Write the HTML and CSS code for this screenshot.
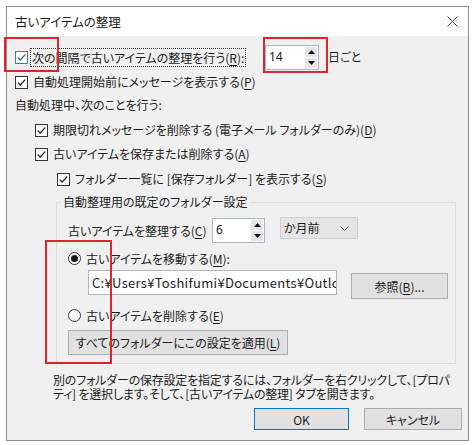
FILE: index.html
```html
<!DOCTYPE html>
<html lang="ja">
<head>
<meta charset="utf-8">
<title>古いアイテムの整理</title>
<link rel="stylesheet" href="styles.css">
</head>
<body>
<div class="dialog">
  <div class="titlebar">
    <span class="title">古いアイテムの整理</span>
    <svg class="close" width="11" height="11" viewBox="0 0 11 11"><path d="M0.5 0.5 L10.5 10.5 M10.5 0.5 L0.5 10.5" stroke="#444" stroke-width="1" fill="none"/></svg>
  </div>
  <div class="content">
    <div class="row row1">
      <div class="row1-left">
        <span class="cb cb-focus"><svg width="11" height="11" viewBox="0 0 11 11"><polyline points="1.8,5.6 4.2,8 9.2,2.6" fill="none" stroke="#2b5f9e" stroke-width="1.3"/></svg></span>
        <span class="focus-label">次の間隔で古いアイテムの整理を行う(<u>R</u>):</span>
      </div>
      <div class="spin">
        <div class="spin-input">14</div>
        <div class="spin-btns">
          <span class="spin-btn"><svg width="7" height="4" viewBox="0 0 7 4"><path d="M0 4 L3.5 0 L7 4 Z" fill="#111"/></svg></span>
          <span class="spin-btn"><svg width="7" height="4" viewBox="0 0 7 4"><path d="M0 0 L3.5 4 L7 0 Z" fill="#111"/></svg></span>
        </div>
      </div>
      <span class="unit">日ごと</span>
    </div>

    <div class="row row2">
      <span class="cb"><svg width="11" height="11" viewBox="0 0 11 11"><polyline points="1.8,5.6 4.2,8 9.2,2.6" fill="none" stroke="#222" stroke-width="1.3"/></svg></span>
      <span class="lbl">自動処理開始前にメッセージを表示する(<u>P</u>)</span>
    </div>

    <div class="row row3">
      <span>自動処理中、次のことを行う:</span>
    </div>

    <div class="row row4 indent1">
      <span class="cb"><svg width="11" height="11" viewBox="0 0 11 11"><polyline points="1.8,5.6 4.2,8 9.2,2.6" fill="none" stroke="#222" stroke-width="1.3"/></svg></span>
      <span class="lbl">期限切れメッセージを削除する (電子メール フォルダーのみ)(<u>D</u>)</span>
    </div>

    <div class="row row5 indent1">
      <span class="cb"><svg width="11" height="11" viewBox="0 0 11 11"><polyline points="1.8,5.6 4.2,8 9.2,2.6" fill="none" stroke="#222" stroke-width="1.3"/></svg></span>
      <span class="lbl">古いアイテムを保存または削除する(<u>A</u>)</span>
    </div>

    <div class="row row6 indent2">
      <span class="cb"><svg width="11" height="11" viewBox="0 0 11 11"><polyline points="1.8,5.6 4.2,8 9.2,2.6" fill="none" stroke="#222" stroke-width="1.3"/></svg></span>
      <span class="lbl">フォルダー一覧に [保存フォルダー] を表示する(<u>S</u>)</span>
    </div>

    <fieldset class="group">
      <legend>自動整理用の既定のフォルダー設定</legend>
      <div class="grow growC">
        <span class="lblC">古いアイテムを整理する(<u>C</u>)</span>
        <div class="spin spin-small">
          <div class="spin-input">6</div>
          <div class="spin-btns">
            <span class="spin-btn"><svg width="7" height="4" viewBox="0 0 7 4"><path d="M0 4 L3.5 0 L7 4 Z" fill="#111"/></svg></span>
            <span class="spin-btn"><svg width="7" height="4" viewBox="0 0 7 4"><path d="M0 0 L3.5 4 L7 0 Z" fill="#111"/></svg></span>
          </div>
        </div>
        <div class="combo">
          <span>か月前</span>
          <svg width="9" height="5" viewBox="0 0 9 5"><polyline points="0.5,0.5 4.5,4.5 8.5,0.5" fill="none" stroke="#555" stroke-width="1"/></svg>
        </div>
      </div>
      <div class="grow growM">
        <span class="rb rb-on"><span class="dot"></span></span>
        <span class="lbl">古いアイテムを移動する(<u>M</u>):</span>
      </div>
      <div class="grow growPath">
        <div class="path">C:¥Users¥Toshifumi¥Documents¥Outlook</div>
        <div class="btn browse">参照(<u>B</u>)...</div>
      </div>
      <div class="grow growE">
        <span class="rb"></span>
        <span class="lbl">古いアイテムを削除する(<u>E</u>)</span>
      </div>
      <div class="btn apply">すべてのフォルダーにこの設定を適用(<u>L</u>)</div>
    </fieldset>

    <p class="note">別のフォルダーの保存設定を指定するには、フォルダーを右クリックして、[プロパ<br>ティ] を選択します。そして、[古いアイテムの整理] タブを開きます。</p>

    <div class="actions">
      <div class="btn ok">OK</div>
      <div class="btn cancel">キャンセル</div>
    </div>
  </div>

  <div class="mark mark1"></div>
  <div class="mark mark2"></div>
  <div class="mark mark3"></div>
</div>
</body>
</html>
```
FILE: styles.css
```css
html, body {
  margin: 0;
  padding: 0;
  background: #ffffff;
}
body {
  font-family: "Noto Sans CJK JP", "Noto Sans", sans-serif;
  font-size: 12px;
  font-feature-settings: "palt";
  color: #1c1c1c;
  width: 474px;
  height: 445px;
  overflow: hidden;
}
u {
  text-decoration: underline;
  text-underline-offset: 2px;
}
.dialog {
  position: relative;
  box-sizing: border-box;
  margin: 6px 0 0 6px;
  width: 463px;
  height: 435px;
  border: 1px solid #8e8e8e;
  background: #f0f0f0;
}
.titlebar {
  height: 29px;
  background: #ffffff;
  display: flex;
  align-items: center;
  justify-content: space-between;
  padding: 0 10px 0 8px;
}
.title {
  font-size: 12.5px;
  line-height: 16px;
}
.close {
  display: block;
}
.content {
  padding-left: 8px;
}
.row {
  display: flex;
  align-items: center;
  height: 18px;
  line-height: 18px;
  white-space: nowrap;
}
.row1 {
  margin-top: 8px;
  height: 26px;
}
.row1-left {
  width: 250px;
  display: flex;
  align-items: center;
}
.cb {
  box-sizing: border-box;
  width: 13px;
  height: 13px;
  border: 1px solid #333333;
  background: #ffffff;
  display: flex;
  align-items: center;
  justify-content: center;
  flex: none;
}
.cb svg {
  display: block;
}
.cb-focus {
  border-color: #3f78b5;
}
.focus-label {
  margin-left: 2px;
  padding: 0 1px;
  line-height: 17px;
  border: 1px dotted #333;
}
.lbl {
  margin-left: 5px;
}
.spin {
  display: flex;
  height: 25px;
}
.spin-input {
  box-sizing: border-box;
  width: 39px;
  height: 25px;
  background: #ffffff;
  border: 1px solid #a9b7cb;
  border-right: none;
  padding-left: 3px;
  line-height: 22px;
  font-family: "Noto Sans", sans-serif;
  font-size: 12px;
}
.spin-btns {
  box-sizing: border-box;
  width: 15px;
  height: 25px;
  display: flex;
  flex-direction: column;
  border: 1px solid #a9b7cb;
  border-left: none;
  background: #ffffff;
  padding: 1px;
  gap: 1px;
}
.spin-btn {
  flex: 1;
  background: #e6e6e6;
  display: flex;
  align-items: center;
  justify-content: center;
}
.spin-btn svg {
  display: block;
}
.unit {
  margin-left: 9px;
}
.row2 {
  margin-top: 3px;
}
.row3 {
  margin-top: 5px;
}
.row4 {
  margin-top: 7px;
}
.row5 {
  margin-top: 6px;
}
.row6 {
  margin-top: 7px;
}
.indent1 {
  padding-left: 20px;
}
.indent2 {
  padding-left: 42px;
}
.group {
  box-sizing: border-box;
  margin: 5px 0 0 41px;
  width: 400px;
  min-width: 0;
  padding: 7px 0 8px 11px;
  border: 1px solid #dcdcdc;
}
.group legend {
  padding: 0 2px;
  margin-left: -7px;
  line-height: 18px;
  white-space: nowrap;
}
.grow {
  display: flex;
  align-items: center;
  white-space: nowrap;
}
.growC {
  height: 25px;
  align-items: flex-start;
}
.lblC {
  width: 144px;
  line-height: 25px;
}
.spin-small .spin-input {
  width: 38px;
  height: 25px;
  padding-left: 3px;
}
.combo {
  box-sizing: border-box;
  margin: -1px 0 0 15px;
  width: 78px;
  height: 22px;
  background: #e5e5e5;
  border: 1px solid #cfcfcf;
  display: flex;
  align-items: center;
  justify-content: space-between;
  padding: 0 8px 0 3px;
  line-height: 20px;
}
.combo svg {
  display: block;
}
.rb {
  box-sizing: border-box;
  width: 13px;
  height: 13px;
  border: 1px solid #333333;
  border-radius: 50%;
  background: #ffffff;
  display: flex;
  align-items: center;
  justify-content: center;
  flex: none;
}
.dot {
  width: 7px;
  height: 7px;
  border-radius: 50%;
  background: #1a1a1a;
}
.growM {
  margin-top: 6px;
  height: 18px;
}
.growPath {
  margin-top: 3px;
  height: 29px;
  align-items: flex-start;
}
.path {
  box-sizing: border-box;
  margin-left: 20px;
  width: 249px;
  height: 25px;
  background: #ffffff;
  border: 1px solid #b5b5b5;
  padding-left: 3px;
  line-height: 23px;
  overflow: hidden;
  white-space: nowrap;
  font-size: 13px;
  letter-spacing: 0.3px;
}
.btn {
  box-sizing: border-box;
  background: #e1e1e1;
  border: 1px solid #adadad;
  display: flex;
  align-items: center;
  justify-content: center;
  white-space: nowrap;
}
.browse {
  margin: 3px 0 0 14px;
  width: 97px;
  height: 26px;
}
.growE {
  margin-top: 7px;
  height: 18px;
}
.apply {
  margin-top: 6px;
  width: 220px;
  height: 25px;
}
.note {
  margin: 9px 0 0 38px;
  width: 410px;
  line-height: 13.5px;
  font-size: 12px;
  letter-spacing: -0.2px;
  white-space: nowrap;
}
.actions {
  display: flex;
  margin-top: 8px;
  padding-left: 239px;
  gap: 15px;
}
.ok {
  width: 95px;
  height: 22px;
  border-color: #0078d7;
}
.cancel {
  width: 98px;
  height: 22px;
}
.mark {
  position: absolute;
  box-sizing: border-box;
  border: 2px solid #d9262f;
}
.mark1 {
  left: -3px;
  top: 30px;
  width: 55px;
  height: 35px;
}
.mark2 {
  left: 256px;
  top: 30px;
  width: 65px;
  height: 36px;
}
.mark3 {
  left: 38px;
  top: 233px;
  width: 67px;
  height: 124px;
}
```
